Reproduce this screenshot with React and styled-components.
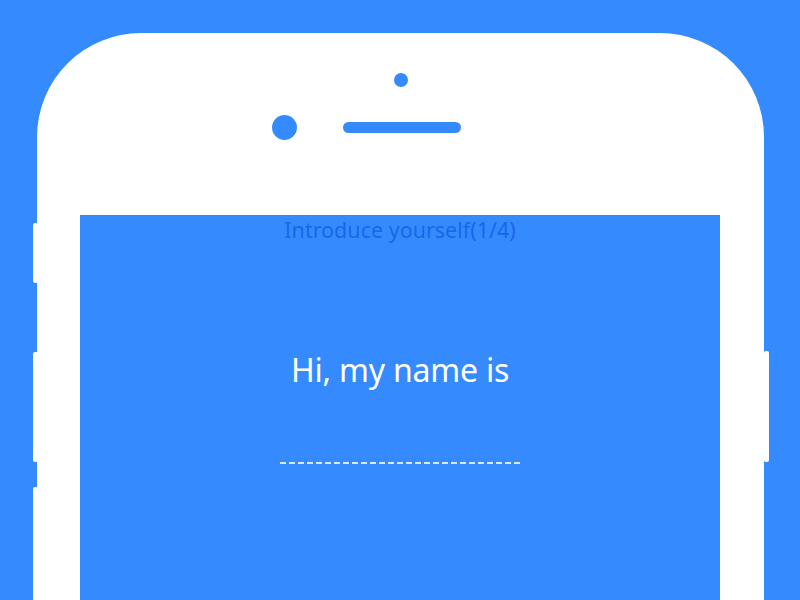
import React from 'react'
import styled, { createGlobalStyle } from 'styled-components'

const Global = createGlobalStyle`
  html, body {
    margin: 0;
    padding: 0;
    background: #358bfe;
    overflow: hidden;
  }
`

const Page = styled.div`
  width: 800px;
  height: 600px;
  background: #358bfe;
  overflow: hidden;
  padding-top: 33px;
  box-sizing: border-box;
  font-family: 'Noto Sans', 'Open Sans', sans-serif;
`

const Phone = styled.div`
  position: relative;
  margin-left: 37px;
  width: 727px;
  height: 600px;
  background: #fff;
  border-radius: 104px 104px 0 0;
  display: flex;
  flex-direction: column;
  align-items: center;
`

const SideButton = styled.div`
  position: absolute;
  width: 5px;
  background: #fff;
  border-radius: 2px;
  top: ${p => p.top}px;
  height: ${p => p.h}px;
  ${p => (p.right ? 'right: -5px;' : 'left: -4px;')}
`

const Head = styled.div`
  height: 182px;
  width: 100%;
  display: flex;
  flex-direction: column;
  align-items: center;
  padding-top: 40px;
  box-sizing: border-box;
`

const Camera = styled.div`
  width: 14px;
  height: 14px;
  border-radius: 50%;
  background: #358bfe;
  margin-left: 1px;
`

const SpeakerRow = styled.div`
  display: flex;
  align-items: center;
  gap: 46px;
  margin-top: 28px;
  margin-left: -69px;
`

const Lens = styled.div`
  width: 25px;
  height: 25px;
  border-radius: 50%;
  background: #358bfe;
`

const Speaker = styled.div`
  width: 118px;
  height: 11px;
  border-radius: 6px;
  background: #358bfe;
`

const Screen = styled.div`
  width: 640px;
  flex: 1;
  background: #358bfe;
  border-top: 1px solid #4a86d6;
  display: flex;
  flex-direction: column;
  align-items: center;
  margin-left: -1px;
`

const Title = styled.div`
  color: #1966ec;
  font-size: 21.5px;
  line-height: 28px;
  letter-spacing: 0;
`

const Greeting = styled.div`
  color: #fff;
  font-size: 32px;
  line-height: 40px;
  margin-top: 106px;
  letter-spacing: -0.2px;
`

const NameLine = styled.div`
  width: 240px;
  height: 2px;
  margin-top: 72px;
  background-image: linear-gradient(to right, rgba(255, 255, 255, 0.8) 6px, transparent 6px);
  background-size: 9px 2px;
  background-repeat: repeat-x;
`

export default function App() {
  return (
    <Page>
      <Global />
      <Phone>
        <SideButton top={190} h={60} />
        <SideButton top={319} h={110} />
        <SideButton top={454} h={140} />
        <SideButton right top={318} h={111} />
        <Head>
          <Camera />
          <SpeakerRow>
            <Lens />
            <Speaker />
          </SpeakerRow>
        </Head>
        <Screen>
          <Title>Introduce yourself(1/4)</Title>
          <Greeting>Hi, my name is</Greeting>
          <NameLine />
        </Screen>
      </Phone>
    </Page>
  )
}
